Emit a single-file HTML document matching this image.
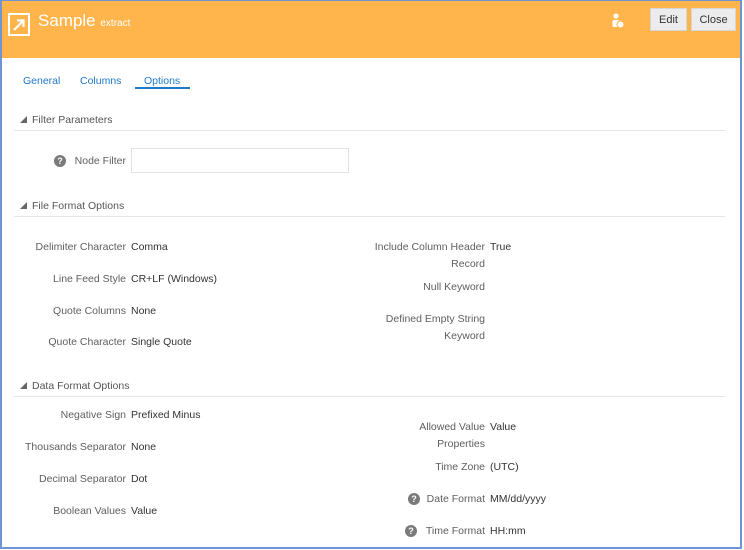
<!DOCTYPE html>
<html><head><meta charset="utf-8"><style>
*{margin:0;padding:0;box-sizing:border-box}
body{width:744px;height:550px;background:#fff;font-family:"Liberation Sans",sans-serif;position:relative;overflow:hidden}
.frame{position:absolute;left:0;top:0;width:742px;height:549px;border:2px solid #6f94d4;border-top:1px solid #6f94d4}
.hdr{position:absolute;left:2px;top:1px;width:738px;height:57px;background:#ffb54c}
.t{position:absolute;white-space:nowrap;font-size:10.5px;line-height:14px;margin-top:1px}
.l{color:#5e5e5e;text-align:right;width:200px}
.v{color:#333}
.sec{position:absolute;left:20px;font-size:10.5px;color:#555;line-height:14px;margin-top:1px}
.sec:before{content:"";display:inline-block;width:0;height:0;border-left:7px solid transparent;border-bottom:7px solid #666;margin-right:5px;vertical-align:0}
.line{position:absolute;left:14px;width:711px;height:1px;background:#e6e6e6}
.help{position:absolute;width:12px;height:12px;border-radius:50%;background:#7a7a7a;color:#fff;font-size:9px;font-weight:bold;text-align:center;line-height:12px;margin-top:1px}
.btn{position:absolute;top:8px;height:23px;background:#ececec;border:1px solid #d6d6d6;font-size:11px;color:#333;text-align:center;line-height:23px}
</style></head><body>
<div class="hdr"></div>
<svg style="position:absolute;left:8px;top:13px" width="23" height="24" viewBox="0 0 23 24"><rect x="1" y="1" width="20" height="21" fill="none" stroke="#fff" stroke-width="2"/><path d="M6 17 L15 8 M9 7.5 H15.5 V14" fill="none" stroke="#fff" stroke-width="2.2"/></svg>
<div class="t" style="left:38px;top:9px;font-size:17px;line-height:22px;color:#fff">Sample <span style="font-size:10px">extract</span></div>
<svg style="position:absolute;left:611px;top:13px" width="14" height="16" viewBox="0 0 14 16"><circle cx="5" cy="3" r="2.6" fill="#fff"/><rect x="1.5" y="7" width="7" height="7" rx="1" fill="#fff"/><circle cx="9.5" cy="11.5" r="3.5" fill="#fff" stroke="#ffb54c" stroke-width="1"/></svg>
<div class="btn" style="left:650px;width:37px">Edit</div>
<div class="btn" style="left:691px;width:45px">Close</div>
<div class="t" style="left:23px;top:73px;color:#1f78c8">General</div>
<div class="t" style="left:80px;top:73px;color:#1f78c8">Columns</div>
<div class="t" style="left:144px;top:73px;color:#1f78c8">Options</div>
<div style="position:absolute;left:135px;top:87px;width:55px;height:2px;background:#1f78c8"></div>

<div class="sec" style="top:112px">Filter Parameters</div>
<div class="line" style="top:130px"></div>
<div class="help" style="left:54px;top:154px">?</div>
<div class="t l" style="left:-74px;top:153px">Node Filter</div>
<div style="position:absolute;left:131px;top:148px;width:218px;height:25px;border:1px solid #e2e2e2"></div>

<div class="sec" style="top:198px">File Format Options</div>
<div class="line" style="top:216px"></div>
<div class="t l" style="left:-74px;top:239px">Delimiter Character</div><div class="t v" style="left:131px;top:239px">Comma</div>
<div class="t l" style="left:-74px;top:271px">Line Feed Style</div><div class="t v" style="left:131px;top:271px">CR+LF (Windows)</div>
<div class="t l" style="left:-74px;top:303px">Quote Columns</div><div class="t v" style="left:131px;top:303px">None</div>
<div class="t l" style="left:-74px;top:334px">Quote Character</div><div class="t v" style="left:131px;top:334px">Single Quote</div>
<div class="t l" style="left:285px;top:239px">Include Column Header</div><div class="t v" style="left:490px;top:239px">True</div>
<div class="t l" style="left:285px;top:256px">Record</div>
<div class="t l" style="left:285px;top:279px">Null Keyword</div>
<div class="t l" style="left:285px;top:311px">Defined Empty String</div>
<div class="t l" style="left:285px;top:328px">Keyword</div>

<div class="sec" style="top:378px">Data Format Options</div>
<div class="line" style="top:396px"></div>
<div class="t l" style="left:-74px;top:407px">Negative Sign</div><div class="t v" style="left:131px;top:407px">Prefixed Minus</div>
<div class="t l" style="left:-74px;top:439px">Thousands Separator</div><div class="t v" style="left:131px;top:439px">None</div>
<div class="t l" style="left:-74px;top:471px">Decimal Separator</div><div class="t v" style="left:131px;top:471px">Dot</div>
<div class="t l" style="left:-74px;top:503px">Boolean Values</div><div class="t v" style="left:131px;top:503px">Value</div>
<div class="t l" style="left:285px;top:419px">Allowed Value</div><div class="t v" style="left:490px;top:419px">Value</div>
<div class="t l" style="left:285px;top:436px">Properties</div>
<div class="t l" style="left:285px;top:459px">Time Zone</div><div class="t v" style="left:490px;top:459px">(UTC)</div>
<div class="help" style="left:408px;top:492px">?</div>
<div class="t l" style="left:285px;top:491px">Date Format</div><div class="t v" style="left:490px;top:491px">MM/dd/yyyy</div>
<div class="help" style="left:405px;top:524px">?</div>
<div class="t l" style="left:285px;top:523px">Time Format</div><div class="t v" style="left:490px;top:523px">HH:mm</div>
<div class="frame"></div>
</body></html>
